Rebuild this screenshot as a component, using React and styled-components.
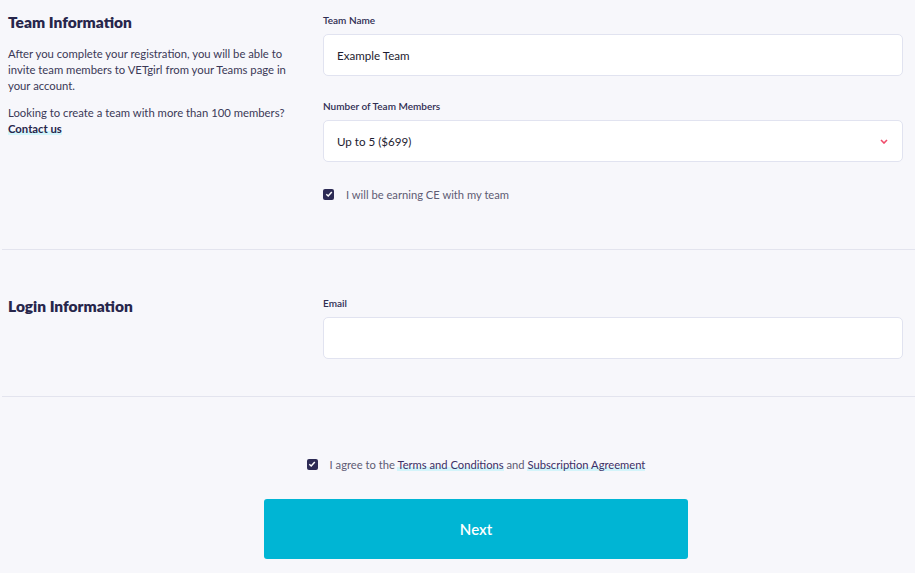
import React from "react";
import styled, { createGlobalStyle } from "styled-components";

const GlobalStyle = createGlobalStyle`
  body {
    margin: 0;
    background: #f7f7fb;
    font-family: Lato, "Noto Sans", sans-serif;
    color: #35334f;
    overflow: hidden;
  }
`;

const CheckIcon = () => (
  <svg width="8" height="8" viewBox="0 0 8 8">
    <path d="M1.3 4.2 L3.2 6 L6.8 1.9" fill="none" stroke="#fff" strokeWidth="1.5" />
  </svg>
);

const Chevron = () => (
  <svg width="8" height="5" viewBox="0 0 8 5">
    <path d="M1 1 L4 4 L7 1" fill="none" stroke="#f04b6a" strokeWidth="1.6" />
  </svg>
);

const App = () => {
  return (
    <Page>
      <GlobalStyle />
      <Section>
        <Side>
          <Heading>Team Information</Heading>
          <Text>
            After you complete your registration, you will be able to invite team members to
            VETgirl from your Teams page in your account.
          </Text>
          <Text gap="11px">
            Looking to create a team with more than 100 members?
            <br />
            <Link bold>Contact us</Link>
          </Text>
        </Side>
        <Fields>
          <Label>Team Name</Label>
          <Input>Example Team</Input>
          <Label gap="22px">Number of Team Members</Label>
          <Input>
            Up to 5 ($699)
            <Chevron />
          </Input>
          <CheckRow gap="24px">
            <Box>
              <CheckIcon />
            </Box>
            I will be earning CE with my team
          </CheckRow>
        </Fields>
      </Section>
      <Section top="45px" bottom="37px">
        <Side>
          <Heading nudge="1px">Login Information</Heading>
        </Side>
        <Fields>
          <Label>Email</Label>
          <Input />
        </Fields>
      </Section>
      <Footer>
        <CheckRow>
          <Box>
            <CheckIcon />
          </Box>
          <span>
            I agree to the <Link>Terms and Conditions</Link> and{" "}
            <Link>Subscription Agreement</Link>
          </span>
        </CheckRow>
        <NextButton>Next</NextButton>
      </Footer>
    </Page>
  );
};

export default App;

const Page = styled.div`
  margin-left: 2px;
`;

const Section = styled.div`
  display: grid;
  grid-template-columns: 315px 1fr;
  padding: ${(p) => p.top || "12px"} 12px ${(p) => p.bottom || "47px"} 6px;
  border-bottom: 1px solid #e3e4ee;
`;

const Side = styled.div`
  display: flex;
  flex-direction: column;
`;

const Heading = styled.h2`
  margin: ${(p) => p.nudge || "0"} 0 0;
  font-size: 15.5px;
  line-height: 20px;
  font-weight: 800;
  color: #27264b;
`;

const Text = styled.p`
  margin: ${(p) => p.gap || "14px"} 0 0;
  font-size: 11.3px;
  line-height: 16px;
  color: #3b3957;
  padding-right: 14px;
`;

const Link = styled.span`
  font-weight: ${(p) => (p.bold ? 700 : 400)};
  color: ${(p) => (p.bold ? "#27264b" : "#3d2f66")};
  background: linear-gradient(transparent 72%, #d3f4fa 72%);
`;

const Fields = styled.div`
  display: flex;
  flex-direction: column;
`;

const Label = styled.div`
  margin-top: ${(p) => p.gap || "0"};
  font-size: 10px;
  line-height: 16px;
  font-weight: 600;
  color: #2f2d52;
`;

const Input = styled.div`
  display: flex;
  align-items: center;
  justify-content: space-between;
  box-sizing: border-box;
  height: 42px;
  margin-top: 6px;
  padding: 0 14px 0 13px;
  background: #fff;
  border: 1px solid #e1e3f0;
  border-radius: 5px;
  font-size: 11.6px;
  color: #1d1c30;
`;

const CheckRow = styled.div`
  display: flex;
  align-items: center;
  gap: 12px;
  height: 16px;
  margin-top: ${(p) => p.gap || "0"};
  font-size: 11.2px;
  color: #5e5c74;
`;

const Box = styled.span`
  display: flex;
  align-items: center;
  justify-content: center;
  width: 11px;
  height: 11px;
  border-radius: 2px;
  background: #2d2b55;
`;

const Footer = styled.div`
  display: flex;
  flex-direction: column;
  align-items: center;
  padding: 59px 0 0 35px;
`;

const NextButton = styled.button`
  margin-top: 27px;
  width: 424px;
  height: 60px;
  border: none;
  border-radius: 3px;
  background: #00b5d4;
  color: #fff;
  font-family: inherit;
  font-size: 15px;
  font-weight: 600;
  cursor: pointer;
`;
